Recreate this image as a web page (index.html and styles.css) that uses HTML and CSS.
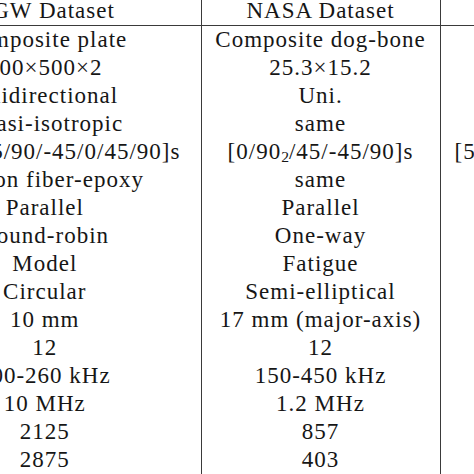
FILE: index.html
```html
<!DOCTYPE html>
<html lang="en">
<head>
<meta charset="utf-8">
<title>Dataset comparison</title>
<link rel="stylesheet" href="styles.css">
</head>
<body>
<table class="cmp">
  <colgroup>
    <col class="c1"><col class="c2"><col class="c3">
  </colgroup>
  <thead>
    <tr><th>UGW Dataset</th><th>NASA Dataset</th><th class="extra"></th></tr>
  </thead>
  <tbody>
    <tr><td>Composite plate</td><td>Composite dog-bone</td><td class="extra"></td></tr>
    <tr><td>500×500×2</td><td>25.3×15.2</td><td class="extra"></td></tr>
    <tr><td>Unidirectional</td><td>Uni.</td><td class="extra"></td></tr>
    <tr><td>Quasi-isotropic</td><td>same</td><td class="extra"></td></tr>
    <tr><td>[0/45/-45/90/-45/0/45/90]s</td><td>[0/90<sub>2</sub>/45/-45/90]s</td><td class="extra">[5</td></tr>
    <tr><td>Carbon fiber-epoxy</td><td>same</td><td class="extra"></td></tr>
    <tr><td>Parallel</td><td>Parallel</td><td class="extra"></td></tr>
    <tr><td>Round-robin</td><td>One-way</td><td class="extra"></td></tr>
    <tr><td>Model</td><td>Fatigue</td><td class="extra"></td></tr>
    <tr><td>Circular</td><td>Semi-elliptical</td><td class="extra"></td></tr>
    <tr><td>10 mm</td><td>17 mm (major-axis)</td><td class="extra"></td></tr>
    <tr><td>12</td><td>12</td><td class="extra"></td></tr>
    <tr><td>100-260 kHz</td><td>150-450 kHz</td><td class="extra"></td></tr>
    <tr><td>10 MHz</td><td>1.2 MHz</td><td class="extra"></td></tr>
    <tr><td>2125</td><td>857</td><td class="extra"></td></tr>
    <tr><td>2875</td><td>403</td><td class="extra"></td></tr>
  </tbody>
</table>
</body>
</html>
```

FILE: styles.css
```css
html, body {
  margin: 0;
  padding: 0;
  background: #ffffff;
  overflow: hidden;
}

body {
  width: 474px;
  height: 474px;
}

.cmp {
  border-collapse: collapse;
  table-layout: fixed;
  width: 700px;
  margin-left: -111px;
  margin-top: -3px;
  font-family: "Liberation Serif", "Times New Roman", serif;
  font-size: 23px;
  letter-spacing: 1px;
  color: #161616;
}

.c1 { width: 312px; }
.c2 { width: 239px; }
.c3 { width: 149px; }

.cmp th,
.cmp td {
  padding: 0;
  line-height: 28px;
  height: 28px;
  font-weight: normal;
  text-align: center;
  white-space: nowrap;
  overflow: visible;
  border-left: 1.5px solid #3a3a3a;
}

.cmp th:first-child,
.cmp td:first-child {
  border-left: none;
}

.cmp thead th {
  border-bottom: 1.5px solid #3a3a3a;
}

.cmp .extra {
  text-align: left;
  padding-left: 14px;
}

.cmp sub {
  font-size: 0.68em;
  line-height: 0;
  vertical-align: -0.22em;
  letter-spacing: 0;
}
```
